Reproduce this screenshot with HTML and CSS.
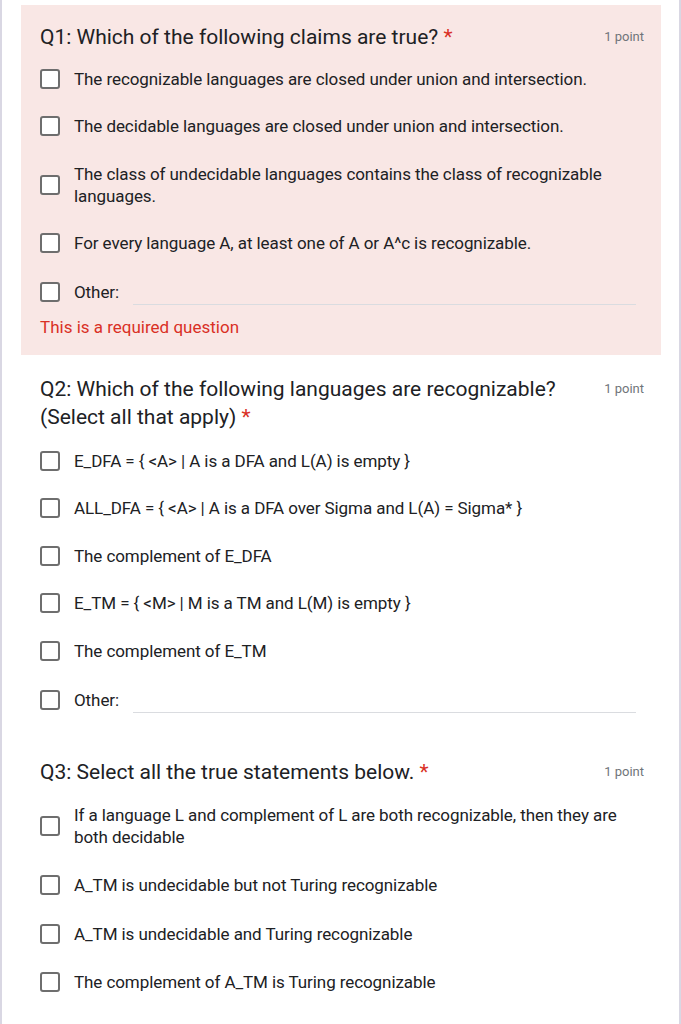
FILE: index.html
```html
<!DOCTYPE html>
<html>
<head>
<meta charset="utf-8">
<link rel="stylesheet" href="styles.css">
</head>
<body>
<div class="page">
  <section class="card card-error">
    <div class="q-head">
      <div class="q-title">Q1: Which of the following claims are true? <span class="req">*</span></div>
      <div class="points">1 point</div>
    </div>
    <div class="opts">
      <div class="opt"><span class="box"></span><span class="label">The recognizable languages are closed under union and intersection.</span></div>
      <div class="opt"><span class="box"></span><span class="label">The decidable languages are closed under union and intersection.</span></div>
      <div class="opt"><span class="box"></span><span class="label">The class of undecidable languages contains the class of recognizable languages.</span></div>
      <div class="opt"><span class="box"></span><span class="label">For every language A, at least one of A or A^c is recognizable.</span></div>
      <div class="opt opt-other"><span class="box"></span><span class="label">Other:</span><span class="line"></span></div>
    </div>
    <div class="error">This is a required question</div>
  </section>

  <section class="card card-q2">
    <div class="q-head q-head-wrap">
      <div class="q-title">Q2: Which of the following languages are recognizable? (Select all that apply) <span class="req">*</span></div>
      <div class="points">1 point</div>
    </div>
    <div class="opts">
      <div class="opt"><span class="box"></span><span class="label">E_DFA = { &lt;A&gt; | A is a DFA and L(A) is empty }</span></div>
      <div class="opt"><span class="box"></span><span class="label">ALL_DFA = { &lt;A&gt; | A is a DFA over Sigma and L(A) = Sigma* }</span></div>
      <div class="opt"><span class="box"></span><span class="label">The complement of E_DFA</span></div>
      <div class="opt"><span class="box"></span><span class="label">E_TM = { &lt;M&gt; | M is a TM and L(M) is empty }</span></div>
      <div class="opt"><span class="box"></span><span class="label">The complement of E_TM</span></div>
      <div class="opt opt-other"><span class="box"></span><span class="label">Other:</span><span class="line"></span></div>
    </div>
  </section>

  <section class="card card-q3">
    <div class="q-head">
      <div class="q-title">Q3: Select all the true statements below. <span class="req">*</span></div>
      <div class="points">1 point</div>
    </div>
    <div class="opts">
      <div class="opt"><span class="box"></span><span class="label">If a language L and complement of L are both recognizable, then they are both decidable</span></div>
      <div class="opt"><span class="box"></span><span class="label">A_TM is undecidable but not Turing recognizable</span></div>
      <div class="opt"><span class="box"></span><span class="label">A_TM is undecidable and Turing recognizable</span></div>
      <div class="opt"><span class="box"></span><span class="label">The complement of A_TM is Turing recognizable</span></div>
    </div>
  </section>
</div>
</body>
</html>
```

FILE: styles.css
```css
html, body {
  margin: 0;
  padding: 0;
  background: #ffffff;
}

body {
  font-family: Roboto, "Liberation Sans", Arial, sans-serif;
  color: #202124;
}

.page {
  box-sizing: border-box;
  width: 681px;
  min-height: 1024px;
  border-left: 2px solid #d9d7e3;
  border-right: 2px solid #d9d7e3;
  padding: 5px 0 0 19px;
}

.card {
  box-sizing: border-box;
  width: 640px;
  padding: 18px 17px 14px 19px;
}

.card-error {
  background: #f9e7e5;
  padding-bottom: 18px;
  margin-bottom: 2px;
}

.card-q2 {
  padding-bottom: 15px;
}

.q-head {
  display: flex;
  align-items: flex-start;
  justify-content: space-between;
  margin-bottom: 4px;
}

.q-head-wrap {
  margin-bottom: 6px;
}

.card-q3 .q-head {
  margin-bottom: 5px;
}

.card-q3 .opt {
  padding: 13.25px 0;
}

.q-title {
  font-size: 21px;
  line-height: 28px;
  width: 545px;
}

.req {
  color: #d93025;
}

.points {
  font-size: 13px;
  line-height: 28px;
  color: #70757a;
  white-space: nowrap;
}

.opts {
  display: flex;
  flex-direction: column;
}

.opt {
  display: flex;
  align-items: center;
  padding: 12.75px 0;
  font-size: 17px;
  line-height: 22px;
  letter-spacing: -0.08px;
}

.opt-other {
  padding: 14px 0;
}

.box {
  flex: none;
  box-sizing: border-box;
  width: 20px;
  height: 20px;
  border: 2px solid #6e6e6e;
  border-radius: 3px;
  background: #ffffff;
  margin-right: 14px;
}

.label {
  max-width: 550px;
}

.line {
  flex: 1;
  align-self: flex-end;
  height: 1px;
  background: #dadce0;
  margin: 0 8px -2px 14px;
}

.error {
  font-size: 17px;
  line-height: 20px;
  color: #d93025;
}
```
